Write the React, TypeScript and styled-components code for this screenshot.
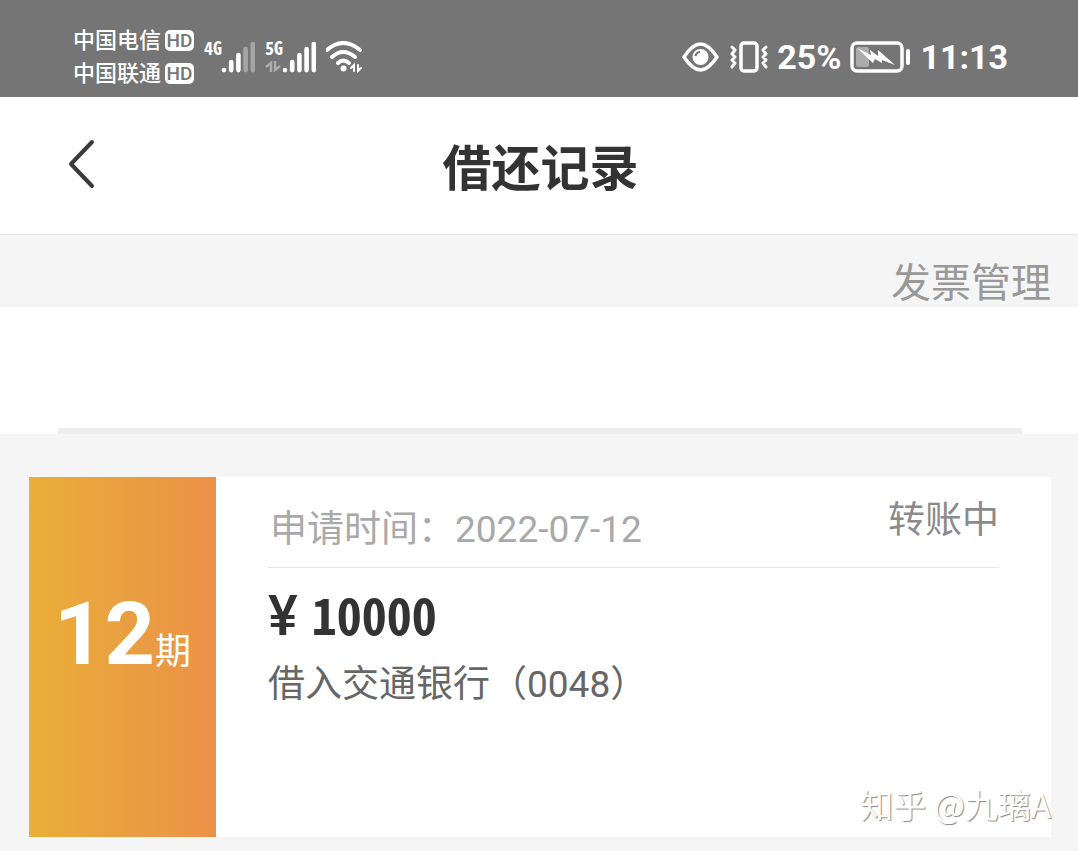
import React from "react";
import styled, { createGlobalStyle } from "styled-components";

const GlobalStyle = createGlobalStyle`
  *, *::before, *::after { box-sizing: border-box; }
  body {
    margin: 0;
    background: #f5f5f5;
    color: #333;
    font-family: Roboto, "Noto Sans CJK SC", sans-serif;
  }
  h1, p { margin: 0; }
  svg { display: block; flex: none; }
`;

const StatusBar = styled.div`
  display: flex;
  justify-content: space-between;
  align-items: center;
  padding: 24px 70px 7px 73px;
  background: #757575;
  color: #fff;
`;

const StatusGroup = styled.div<{ $gap: number }>`
  display: flex;
  align-items: center;
  gap: ${(p) => p.$gap}px;
`;

const Carrier = styled.div`
  display: flex;
  align-items: center;
  gap: 4px;
  font-size: 22px;
  font-weight: 500;
  line-height: 33px;
`;

const HdBadge = styled.span`
  width: 29px;
  height: 21px;
  border-radius: 5px;
  background: #fff;
  color: #757575;
  font-size: 19px;
  font-weight: 500;
  line-height: 22px;
  text-align: center;
`;

const Network = styled.div`
  display: flex;
  height: 31px;
`;

const NetworkLabel = styled.div`
  display: flex;
  flex-direction: column;
  gap: 8px;
  width: 17px;
  font-family: "Noto Sans CJK SC", sans-serif;
  font-feature-settings: "hwid";
  font-size: 18px;
  font-weight: 700;
  line-height: 11px;
`;

const StatusText = styled.span`
  font-size: 34px;
  font-weight: 700;
  line-height: 40px;
`;

const NavBar = styled.header`
  display: grid;
  grid-template-columns: 1fr auto 1fr;
  align-items: center;
  height: 138px;
  padding: 0 53px 0 56px;
  border-bottom: 1px solid #e4e4e4;
  background: #fff;
`;

const BackButton = styled.button`
  justify-self: start;
  padding: 12px 12px 16px;
  border: 0;
  background: none;
  color: #3a3a3a;
  cursor: pointer;
`;

const Title = styled.h1`
  padding-top: 9px;
  font-size: 49px;
  font-weight: 700;
  line-height: 72px;
`;

const Toolbar = styled.div`
  display: flex;
  justify-content: flex-end;
  padding: 19px 27px 0;
  height: 72px;
`;

const InvoiceLink = styled.a`
  color: #999;
  font-size: 40px;
  line-height: 60px;
  text-decoration: none;
`;

const Summary = styled.section`
  display: flex;
  align-items: flex-end;
  height: 127px;
  padding: 0 56px 0 58px;
  background: #fff;
`;

const SummaryRule = styled.div`
  flex: 1;
  height: 6px;
  background: #ececec;
`;

const Records = styled.main`
  padding: 43px 27px 14px 29px;
`;

const Card = styled.article`
  display: flex;
  position: relative;
  min-height: 360px;
  background: #fff;
`;

const Term = styled.div`
  display: flex;
  align-items: baseline;
  justify-content: center;
  width: 187px;
  padding-top: 105px;
  background: linear-gradient(90deg, #ebae38 0%, #e9a041 50%, #ec9147 100%);
  color: #fff;
`;

const TermCount = styled.span`
  font-size: 88px;
  font-weight: 700;
  line-height: 104px;
`;

const TermUnit = styled.span`
  font-size: 36px;
`;

const Details = styled.div`
  flex: 1;
  padding: 17px 52px 0;
`;

const DetailHead = styled.div`
  display: flex;
  justify-content: space-between;
  height: 74px;
  border-bottom: 1px solid #e8e8e8;
  font-size: 37px;
  line-height: 54px;
`;

const AppliedAt = styled.p`
  padding: 9px 0 0 2px;
  color: #a9a9a9;
`;

const Status = styled.span`
  color: #8b8b8b;
`;

const Amount = styled.p`
  display: flex;
  align-items: baseline;
  gap: 14px;
  padding-top: 13px;
  font-family: "Noto Sans CJK SC", sans-serif;
  font-feature-settings: "hwid";
  font-size: 50px;
  font-weight: 700;
  line-height: 64px;
`;

const Currency = styled.span`
  font-family: Roboto, sans-serif;
  font-size: 56px;
  font-weight: 500;
`;

const Bank = styled.p`
  padding-top: 10px;
  color: #666;
  font-size: 37px;
  line-height: 54px;
`;

const Watermark = styled.span`
  position: absolute;
  right: 0;
  bottom: 9px;
  color: #fff;
  font-family: "Noto Sans CJK SC", sans-serif;
  font-size: 33px;
  line-height: 48px;
  text-shadow: 1px 1px 1px #888;
`;

function SignalBars({ active }: { active: number }) {
  return (
    <svg width="34" height="31" viewBox="0 0 34 31" stroke="#fff" strokeWidth="4.600" strokeLinecap="round">
      {[28, 20, 13, 7, 2].map((top, i) => (
        <path key={top} d={`M${3 + i * 7.2} ${top}V28.100`} opacity={i < active ? 1 : 0.35} />
      ))}
    </svg>
  );
}

function DataArrows() {
  return (
    <svg width="17" height="11" viewBox="0 0 17 11" fill="none" stroke="#fff" strokeWidth="2.500" opacity=".4">
      <path d="M1 6L6 2V11M10 0V9L15 5" />
    </svg>
  );
}

function WifiIcon() {
  return (
    <svg width="38" height="32" viewBox="2 0 38 32" fill="none" stroke="#fff" strokeWidth="4" strokeLinecap="round">
      <path d="M3 9Q19 -5 36 9M8 16Q19 6 31 16M14 22Q19 17 25 22" />
      <circle cx="19.500" cy="27.500" r="3" fill="#fff" stroke="none" />
      <path d="M27 27L30 24V30M34 24V30L37 27" strokeWidth="2" />
    </svg>
  );
}

function EyeIcon() {
  return (
    <svg width="37" height="30" viewBox="0 0 37 30" fill="none" stroke="#fff" strokeWidth="3.500">
      <path d="M2 15C8 6 13 2 18.500 2S29 6 35 15C29 24 24 28 18.500 28S8 24 2 15Z" strokeLinejoin="round" />
      <circle cx="18.500" cy="15" r="8" fill="#fff" stroke="none" />
      <path d="M13.500 14A5 5 0 0 1 18 10" stroke="#757575" strokeWidth="2" />
    </svg>
  );
}

function VibrateIcon() {
  return (
    <svg width="40" height="32" viewBox="0 0 40 32" fill="none" stroke="#fff" strokeWidth="3.500" strokeLinejoin="round" strokeLinecap="round">
      <rect x="13" y="2" width="16" height="28" rx="3" />
      <path d="M4 6L7 9L4 13L7 16L4 19L7 22L4 26M38 6L35 9L38 13L35 16L38 19L35 22L38 26" strokeWidth="3" />
    </svg>
  );
}

function BatteryIcon() {
  return (
    <svg width="61" height="32" viewBox="0 0 61 32" fill="none" stroke="#fff" strokeWidth="3.500">
      <rect x="2" y="2" width="50" height="28" rx="5" />
      <rect x="6" y="6" width="13" height="20" rx="2" fill="#fff" stroke="none" opacity=".4" />
      <path d="M7 7L21 14L20 9L28 15L28 9L45 24L32 19L32 22L25 18L23 22Z" fill="#fff" stroke="none" />
      <path d="M58 10V22" strokeLinecap="round" strokeWidth="4" />
    </svg>
  );
}

function BackIcon() {
  return (
    <svg width="28" height="50" viewBox="0 0 28 50" fill="none" stroke="currentColor" strokeWidth="4" strokeLinecap="round" strokeLinejoin="round">
      <path d="M24 3L3 25L24 47" />
    </svg>
  );
}

export default function App() {
  return (
    <>
      <GlobalStyle />
      <StatusBar>
        <StatusGroup $gap={10}>
          <div>
            <Carrier>中国电信<HdBadge>HD</HdBadge></Carrier>
            <Carrier>中国联通<HdBadge>HD</HdBadge></Carrier>
          </div>
          <Network>
            <NetworkLabel>4G</NetworkLabel>
            <SignalBars active={3} />
          </Network>
          <Network>
            <NetworkLabel>5G<DataArrows /></NetworkLabel>
            <SignalBars active={5} />
          </Network>
          <WifiIcon />
        </StatusGroup>
        <StatusGroup $gap={9}>
          <EyeIcon />
          <VibrateIcon />
          <StatusText>25%</StatusText>
          <BatteryIcon />
          <StatusText>11:13</StatusText>
        </StatusGroup>
      </StatusBar>
      <NavBar>
        <BackButton type="button" aria-label="返回"><BackIcon /></BackButton>
        <Title>借还记录</Title>
      </NavBar>
      <Toolbar>
        <InvoiceLink href="#invoice">发票管理</InvoiceLink>
      </Toolbar>
      <Summary><SummaryRule /></Summary>
      <Records>
        <Card>
          <Term>
            <TermCount>12</TermCount>
            <TermUnit>期</TermUnit>
          </Term>
          <Details>
            <DetailHead>
              <AppliedAt>申请时间：2022-07-12</AppliedAt>
              <Status>转账中</Status>
            </DetailHead>
            <Amount><Currency>¥</Currency>10000</Amount>
            <Bank>借入交通银行（0048）</Bank>
          </Details>
          <Watermark>知乎 @九璃A</Watermark>
        </Card>
      </Records>
    </>
  );
}
